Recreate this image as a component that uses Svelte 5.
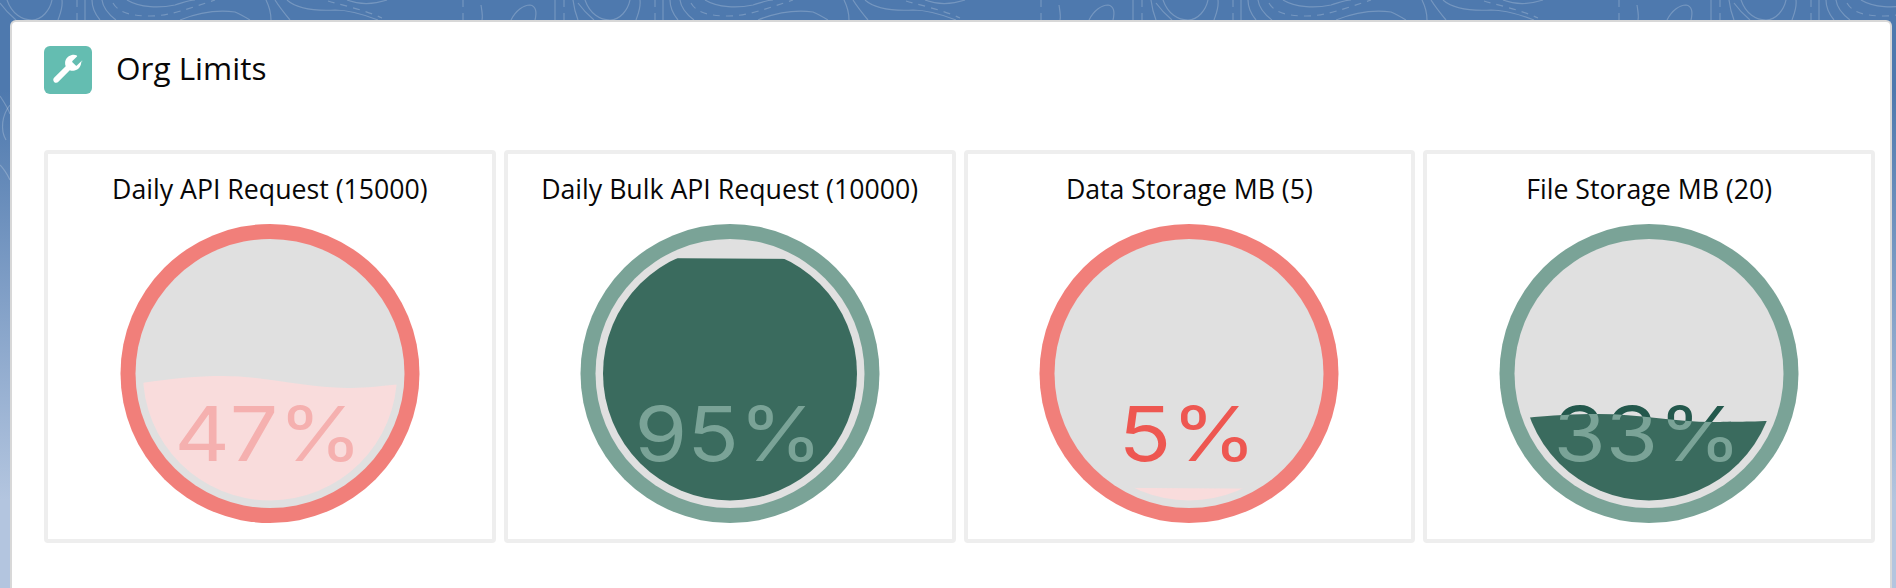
<script>
  const gauges = [
    { title: "Daily API Request (15000)", value: "47%", tone: "red", span: 188,
      wave: "M0 163 C40 157 70 153 103 153 C145 153 185 165 227 165 C245 165 262 163 300 159 V300 H0 Z" },
    { title: "Daily Bulk API Request (10000)", value: "95%", tone: "green", span: 188,
      wave: "M0 34.5 L300 36.5 V300 H0 Z" },
    { title: "Data Storage MB (5)", value: "5%", tone: "red", span: 138,
      wave: "M0 264.5 L300 266 V300 H0 Z" },
    { title: "File Storage MB (20)", value: "33%", tone: "green", span: 188,
      wave: "M0 198 C40 193 70 191 99 191 C140 191 175 199 215 199 C235 199 250 199 300 197 V300 H0 Z" }
  ];

  // the topographic background repeats every 578px or so
  const offsets = [0, 578, 1156, 1734];
  const lines = [
    "M7 0 C12 14 22 20 32 20 C42 20 50 10 52 0",
    "M0 3 C5 10 10 15 16 20",
    "M62 0 C63 8 60 14 58 20",
    "M85 0 V20",
    "M92 0 C92 8 95 14 100 20",
    "M102 0 C103 8 108 14 116 20",
    "M127 0 C140 8 160 8 175 5 C185 2 190 0 195 0",
    "M180 20 C200 12 220 10 235 12 C240 14 245 17 250 20",
    "M266 0 C269 6 271 12 271 20",
    "M275 0 C280 8 285 14 290 20",
    "M287 0 C297 9 315 11 335 10 C350 10 365 15 378 20",
    "M347 0 C360 5 375 4 387 0",
    "M481 5 C482 12 483 16 482 20",
    "M511 20 C516 10 524 5 530 5 C536 6 537 12 535 20",
    "M555 0 V20",
    "M573 0 C574 8 576 15 578 20"
  ];
  const dashed = [
    "M77 0 V20",
    "M113 3 C118 12 130 16 150 16 C170 16 190 8 215 0",
    "M328 1 C345 6 365 10 382 18",
    "M463 0 V20",
    "M564 0 V20"
  ];
</script>

<div class="page">
  <svg class="contours" viewBox="0 0 1896 588" aria-hidden="true">
    {#each offsets as x}
      <g transform="translate({x} 0)">
        {#each lines as d}
          <path {d} />
        {/each}
        {#each dashed as d}
          <path {d} stroke-dasharray="7 6" />
        {/each}
      </g>
    {/each}
    <path d="M0 96 C4 102 8 108 10 114" />
    <path d="M10 105 C2 115 0 130 6 140" />
    <path d="M0 165 C5 170 8 176 10 180" />
  </svg>

  <section class="card">
    <header class="head">
      <span class="icon">
        <svg viewBox="0 0 48 48" width="48" height="48">
          <path fill="#fff" d="M38.5 15.2c-.2-.4-.7-.5-1-.2l-4.600 4.600c-.3.3-.8.3-1.100 0l-3.400-3.400c-.3-.3-.3-.8 0-1.100l4.600-4.600c.3-.3.2-.8-.2-1-1.500-.7-3.200-.9-5-.5-3.700.7-6.500 3.900-6.700 7.600-.1 1.300.1 2.500.6 3.600L10.300 31.600c-1.300 1.100-1.400 3.100-.2 4.300 1.200 1.200 3.200 1.100 4.300-.2l11.400-11.400c1.100.4 2.300.6 3.600.5 3.700-.3 6.900-3 7.600-6.700.3-1.100.2-1.900.5-2.900z" />
        </svg>
      </span>
      <h1>Org Limits</h1>
    </header>

    <div class="grid">
      {#each gauges as g, i}
        <article class="tile">
          <h2>{g.title}</h2>
          <svg class="gauge" viewBox="0 0 300 300" width="300" height="300">
            <defs>
              <clipPath id="wave-{i}">
                <path d={g.wave} />
              </clipPath>
              <clipPath id="disc-{i}">
                <circle cx="150" cy="150.5" r="127" />
              </clipPath>
            </defs>
            <circle class="ring-{g.tone}" cx="150" cy="150.5" r="149.5" />
            <circle class="back" cx="150" cy="150.5" r="134.5" />
            <text class="num text-{g.tone}" x="148.5" y="238" textLength={g.span} lengthAdjust="spacingAndGlyphs">{g.value}</text>
            <g clip-path="url(#disc-{i})">
              <path class="wave-{g.tone}" d={g.wave} />
              <g clip-path="url(#wave-{i})">
                <text class="num over-{g.tone}" x="148.5" y="238" textLength={g.span} lengthAdjust="spacingAndGlyphs">{g.value}</text>
              </g>
            </g>
          </svg>
        </article>
      {/each}
    </div>
  </section>
</div>

<style>
  :global(body) {
    margin: 0;
    overflow: hidden;
  }
  .page {
    position: relative;
    box-sizing: border-box;
    height: 588px;
    padding: 20px 4px 0 10px;
    overflow: hidden;
    background: linear-gradient(#4e79ae 0, #4e79ae 90px, #b3c5df 500px);
    font-family: "Open Sans", sans-serif;
    color: #080707;
  }
  .contours {
    position: absolute;
    inset: 0;
    width: 100%;
    height: 100%;
    fill: none;
    stroke: #fff;
    stroke-opacity: 0.22;
    stroke-width: 1.2;
  }
  .card {
    position: relative;
    box-sizing: border-box;
    height: 568px;
    padding: 24px 15px 0 32px;
    background: #fff;
    border: 2px solid #d8d8d8;
    border-bottom: 0;
    border-radius: 6px 6px 0 0;
  }
  .head {
    display: flex;
    align-items: center;
    gap: 24px;
    height: 48px;
  }
  .icon {
    display: block;
    width: 48px;
    height: 48px;
    border-radius: 6px;
    background: #64bdb1;
  }
  .icon svg {
    display: block;
  }
  h1 {
    margin: 0 0 6px;
    font-size: 31.5px;
    font-weight: 400;
  }
  .grid {
    display: flex;
    gap: 8px;
    margin-top: 56px;
  }
  .tile {
    box-sizing: border-box;
    flex: 1;
    height: 393px;
    padding-top: 21px;
    border: 4px solid #eee;
    border-radius: 4px;
    text-align: center;
  }
  h2 {
    margin: 0 0 20px;
    font-size: 26.7px;
    line-height: 28px;
    font-weight: 400;
    white-space: nowrap;
  }
  .gauge {
    display: block;
    margin: 0 auto;
  }
  .back {
    fill: #e0e0e0;
  }
  .ring-red {
    fill: #f17f7a;
  }
  .ring-green {
    fill: #7aa397;
  }
  .wave-red {
    fill: #f9dcdc;
  }
  .wave-green {
    fill: #3a6b5e;
  }
  .num {
    font-family: Inter, sans-serif;
    font-weight: 400;
    font-size: 76px;
    text-anchor: middle;
  }
  .text-red {
    fill: #ee5751;
  }
  .text-green {
    fill: #23584c;
  }
  .over-red {
    fill: #f5b0af;
  }
  .over-green {
    fill: #7aa397;
  }
</style>
